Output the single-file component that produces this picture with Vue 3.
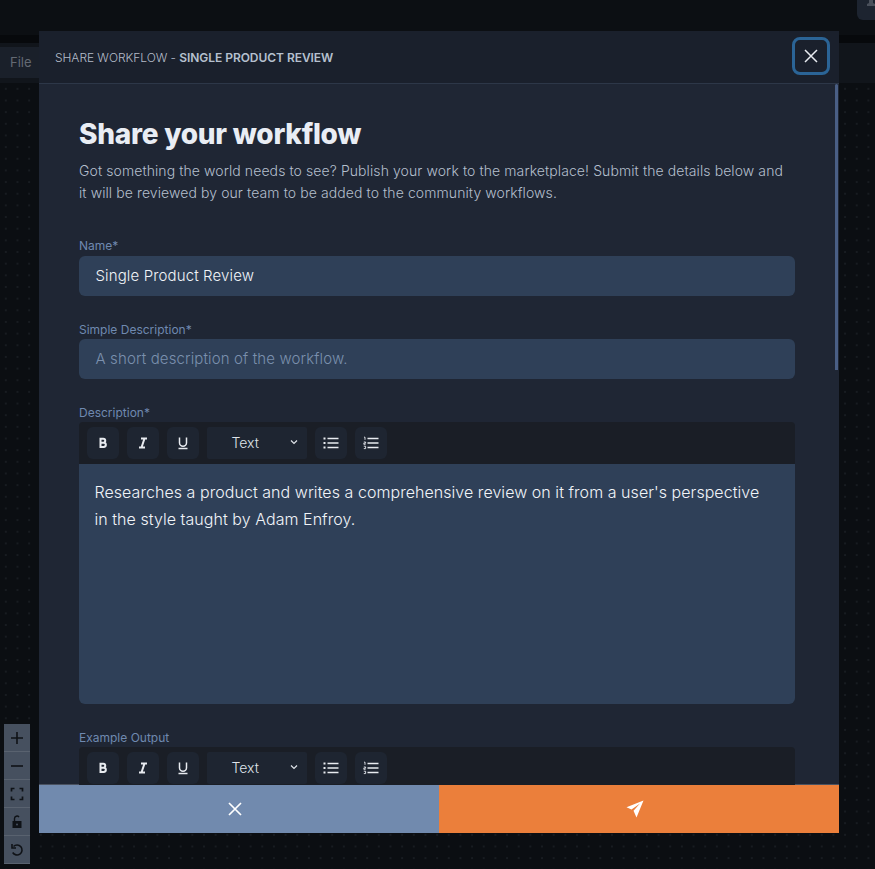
<script setup>
const controls = ['plus', 'minus', 'fit', 'lock', 'undo']

const editors = [
  { label: 'Description*', text: "Researches a product and writes a comprehensive review on it from a user's perspective in the style taught by Adam Enfroy." },
  { label: 'Example Output', text: '' }
]
</script>

<template>
  <div class="page">
    <div class="topbar">
      <div class="corner-btn">
        <svg width="10" height="6" viewBox="0 0 10 6"><path d="M2 6V4l2-1V0h4v3l2 1v2z" fill="#4a505b" /></svg>
      </div>
    </div>
    <div class="strip"></div>
    <div class="menubar"><span class="file">File</span></div>
    <div class="canvas">
      <div class="controls">
        <div v-for="c in controls" :key="c" class="ctrl">
          <svg v-if="c === 'plus'" width="14" height="14" viewBox="0 0 14 14"><path d="M7 1v12M1 7h12" stroke="#0f1217" stroke-width="1.6" fill="none" /></svg>
          <svg v-else-if="c === 'minus'" width="14" height="14" viewBox="0 0 14 14"><path d="M1 7h12" stroke="#0f1217" stroke-width="1.6" fill="none" /></svg>
          <svg v-else-if="c === 'fit'" width="14" height="14" viewBox="0 0 14 14"><path d="M1.500 4.500v-3h3M9.500 1.500h3v3M12.500 9.500v3h-3M4.500 12.500h-3v-3" stroke="#0f1217" stroke-width="1.700" fill="none" /></svg>
          <svg v-else-if="c === 'lock'" width="14" height="14" viewBox="0 0 14 14"><path d="M2.500 6h9v7h-9z" fill="#0f1217" /><path d="M4.500 6V3.500a2.500 2.500 0 0 1 4.500-1.400" stroke="#0f1217" stroke-width="1.400" fill="none" /><circle cx="7" cy="9.500" r="1" fill="#46505f" /></svg>
          <svg v-else width="14" height="14" viewBox="0 0 14 14"><path d="M3.500 3.500a5 5 0 1 1-.800 6" stroke="#0f1217" stroke-width="1.600" fill="none" /><path d="M2 1v4h4" stroke="#0f1217" stroke-width="1.600" fill="none" /></svg>
        </div>
      </div>
    </div>

    <div class="modal">
      <div class="modal-header">
        <span class="crumb">SHARE WORKFLOW - <b>SINGLE PRODUCT REVIEW</b></span>
        <button class="close">
          <svg width="14" height="14" viewBox="0 0 14 14"><path d="M1 1l12 12M13 1L1 13" stroke="#e8ebf0" stroke-width="1.500" fill="none" /></svg>
        </button>
      </div>
      <div class="modal-body">
        <div class="scrollbar"></div>
        <h1>Share your workflow</h1>
        <p class="intro">Got something the world needs to see? Publish your work to the marketplace! Submit the details below and it will be reviewed by our team to be added to the community workflows.</p>

        <label class="field-label first">Name*</label>
        <div class="input">Single Product Review</div>

        <label class="field-label">Simple Description*</label>
        <div class="input placeholder">A short description of the workflow.</div>

        <template v-for="e in editors" :key="e.label">
          <label class="field-label">{{ e.label }}</label>
          <div class="toolbar">
            <span class="tool"><svg width="14" height="14" viewBox="0 0 14 14"><path d="M4.500 2.800h2.800a1.900 1.900 0 0 1 0 3.900H4.500zM4.500 6.700h3.200a2.100 2.100 0 0 1 0 4.300H4.500z" stroke="#e8ebf0" stroke-width="2" fill="none" /></svg></span>
            <span class="tool"><svg width="14" height="14" viewBox="0 0 14 14"><path d="M5 2.500h6M3 11.500h6M8.500 2.500l-3 9" stroke="#e8ebf0" stroke-width="2" fill="none" /></svg></span>
            <span class="tool"><svg width="14" height="14" viewBox="0 0 14 14"><path d="M3.500 1.500v5.300a3.500 3.500 0 0 0 7 0V1.500M2.500 12.500h9" stroke="#e8ebf0" stroke-width="1.500" fill="none" /></svg></span>
            <span class="select">
              <span>Text</span>
              <svg class="chev" width="8" height="6" viewBox="0 0 8 6"><path d="M1 1.500l3 3 3-3" stroke="#dfe3e9" stroke-width="1.200" fill="none" /></svg>
            </span>
            <span class="tool"><svg width="16" height="14" viewBox="0 0 16 14"><path d="M4.500 2.500H15.500M4.500 7H15.500M4.500 11.500H15.500" stroke="#e8ebf0" stroke-width="1.500" fill="none" /><path d="M.500 2.500h2M.500 7h2M.500 11.500h2" stroke="#e8ebf0" stroke-width="2" fill="none" /></svg></span>
            <span class="tool"><svg width="16" height="14" viewBox="0 0 16 14"><path d="M4.500 2.500H15.500M4.500 7H15.500M4.500 11.500H15.500" stroke="#e8ebf0" stroke-width="1.500" fill="none" /><path d="M1 1.200h1v2.600M.800 6h1.800v1.200H.800v1.100h1.800M.800 10.200h1.800v2.400H.800" stroke="#e8ebf0" stroke-width=".9" fill="none" /></svg></span>
          </div>
          <div class="editor">{{ e.text }}</div>
        </template>
      </div>
      <div class="modal-footer">
        <button class="foot cancel">
          <svg width="14" height="14" viewBox="0 0 14 14"><path d="M1 1l12 12M13 1L1 13" stroke="#fff" stroke-width="1.700" fill="none" /></svg>
        </button>
        <button class="foot send">
          <svg width="18" height="18" viewBox="0 0 18 18"><path d="M17.500.500L.500 7.200l5 2.300L14 3.500l-6.500 7.200 3 6.800z" fill="#fff" /></svg>
        </button>
      </div>
    </div>
  </div>
</template>

<style>
html, body { background: #0b0e12; }
</style>

<style scoped>
.page {
  position: relative;
  width: 875px;
  height: 869px;
  overflow: hidden;
  display: flex;
  flex-direction: column;
  background: #0b0e12;
  font-family: Inter, "Liberation Sans", sans-serif;
}
.topbar { height: 35px; flex: none; background: #0c0f13; display: flex; justify-content: flex-end; }
.corner-btn { width: 18px; height: 20px; background: #1d2430; border-radius: 0 0 0 6px; padding-left: 8px; box-sizing: border-box; line-height: 0; }
.strip { height: 8px; flex: none; background: #07090c; }
.menubar { height: 40px; flex: none; box-sizing: border-box; padding: 4px 0 5px; background: #11151b; display: flex; align-items: stretch; }
.file { width: 60px; padding-left: 10px; font-size: 13px; line-height: 31px; color: #646a73; background: #1a202a; }
.canvas {
  flex: 1;
  display: flex;
  flex-direction: column;
  justify-content: flex-end;
  padding-left: 4px;
  background-color: #0b0e12;
  background-image: radial-gradient(circle, #181c21 0.7px, transparent 0.9px);
  background-size: 11.67px 11.67px;
}
.controls { width: 26px; height: 145px; overflow: hidden; flex: none; }
.ctrl { height: 27px; border-bottom: 1px solid #59626f; background: #46505f; display: flex; align-items: center; justify-content: center; }

.modal {
  position: absolute;
  left: 39px;
  top: 31px;
  width: 800px;
  height: 802px;
  display: flex;
  flex-direction: column;
  background: #1f2634;
}
.modal-header {
  height: 52px;
  flex: none;
  display: flex;
  align-items: center;
  justify-content: space-between;
  padding: 0 9px 0 16px;
  background: #1a202c;
  border-bottom: 1px solid #2d3748;
}
.crumb { font-size: 12px; font-weight: 300; color: #b4bcc9; letter-spacing: -0.05px; }
.crumb b { font-weight: 600; color: #b6c0cf; }
.close {
  width: 38px;
  height: 38px;
  margin-top: -3px;
  padding: 0;
  display: flex;
  align-items: center;
  justify-content: center;
  background: transparent;
  border: 3px solid #2b6496;
  border-radius: 8px;
}
.modal-body {
  position: relative;
  flex: 1;
  min-height: 0;
  overflow: hidden;
  padding: 31px 44px 0 40px;
}
.scrollbar { position: absolute; right: 1px; top: 0; width: 3px; height: 286px; background: #4a5f85; border-radius: 2px 2px 0 0; }
h1 { margin: 0; font-size: 28px; line-height: 38px; font-weight: 800; color: #e9edf4; letter-spacing: -0.25px; }
.intro { margin: 7px 0 0; max-width: 712px; font-size: 14px; font-weight: 300; letter-spacing: 0.09px; line-height: 22px; color: #b4bfcd; }
.field-label { display: block; margin: 26px 0 1px; font-size: 12px; line-height: 16px; color: #6f89b0; }
.field-label.first { margin: 34px 0 2px; }
.input {
  height: 40px;
  line-height: 40px;
  padding: 0 16.500px;
  border-radius: 6px;
  background: #2f4058;
  font-size: 15px;
  font-weight: 300;
  letter-spacing: 0.13px;
  color: #f1f4f8;
}
.input.placeholder { color: #7b90ae; }
.toolbar {
  height: 42px;
  display: flex;
  gap: 8px;
  padding: 5px 8px;
  box-sizing: border-box;
  background: #1a1e26;
  border-radius: 4px 4px 0 0;
}
.tool { width: 32px; height: 32px; display: flex; align-items: center; justify-content: center; background: #1e2531; border-radius: 6px; }
.select {
  position: relative;
  width: 100px;
  height: 32px;
  padding: 0 0 2px 24.500px;
  box-sizing: border-box;
  display: flex;
  align-items: center;
  background: #1e2531;
  border-radius: 2px;
  font-size: 14px;
  font-weight: 300;
  color: #dfe3e9;
}
.chev { position: absolute; right: 9px; top: 12px; }
.editor {
  height: 240px;
  padding: 15px 30px 15px 15.500px;
  box-sizing: border-box;
  border-radius: 0 0 6px 6px;
  background: #2f4058;
  font-size: 16px;
  font-weight: 300;
  letter-spacing: 0.05px;
  line-height: 27px;
  color: #f1f4f8;
  margin-bottom: 7px;
}
.modal-footer { flex: none; height: 48px; display: flex; border-top: 1px solid #4a5261; margin-top: -1px; }
.foot { flex: 1; border: 0; padding: 0 8px 0 0; display: flex; align-items: center; justify-content: center; }
.cancel { background: #718aae; }
.send { background: #eb7f3b; }
</style>
